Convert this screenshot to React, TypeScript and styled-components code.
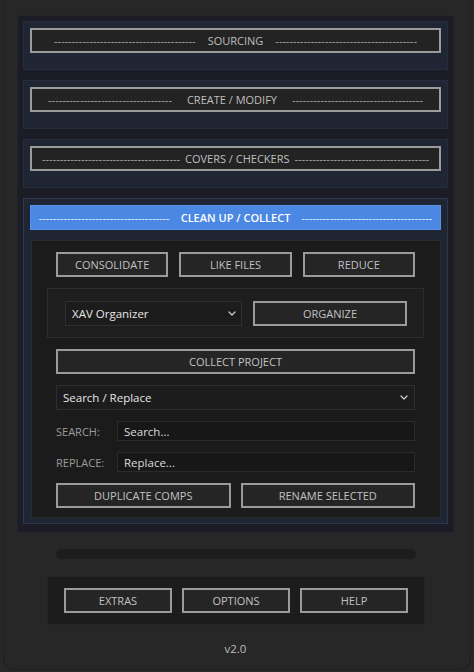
import React from "react";
import styled, { createGlobalStyle } from "styled-components";

const GlobalStyle = createGlobalStyle`
  html, body { margin: 0; padding: 0; background: #272727; }
  body { font-family: "Open Sans", "Noto Sans", sans-serif; }
  * { box-sizing: border-box; }
`;

const Page = styled.div`
  width: 474px;
  height: 672px;
  padding: 0 3px 2px;
  background: #282828;
`;

const Window = styled.div`
  height: 100%;
  display: flex;
  flex-direction: column;
  padding: 15px 16px 0 13px;
  border: 1px solid #1f1f1f;
  border-top: none;
  border-radius: 0 0 10px 10px;
  background: #272727;
`;

const OuterPanel = styled.div`
  display: flex;
  flex-direction: column;
  gap: 10px;
  padding: 5px 5px 8px;
  background: #1b1c26;
  border: 1px solid #22232d;
`;

const Section = styled.div<{ $active?: boolean }>`
  display: flex;
  flex-direction: column;
  padding: ${(p) => (p.$active ? "6px 6px 5px" : "6px 6px 16px")};
  background: #1f2533;
  border: 1px solid ${(p) => (p.$active ? "#2d3850" : "#252c3b")};
`;

const Header = styled.div<{ $active?: boolean; $gap: number }>`
  height: 25px;
  display: flex;
  align-items: center;
  justify-content: center;
  gap: ${(p) => p.$gap}px;
  white-space: nowrap;
  overflow: hidden;
  font-size: 11px;
  background: ${(p) => (p.$active ? "#4a88e3" : "#232323")};
  border: ${(p) => (p.$active ? "1px solid #5a93e6" : "2px solid #9b9b9b")};
  color: ${(p) => (p.$active ? "#ffffff" : "#bfbfbf")};
  font-weight: ${(p) => (p.$active ? 600 : 400)};
`;

const Dashes = styled.span<{ $active?: boolean }>`
  color: ${(p) => (p.$active ? "#e8f0ff" : "#a9a9a9")};
  font-weight: 400;
`;

const Inner = styled.div`
  margin-top: 10px;
  margin-left: 1px;
  display: flex;
  flex-direction: column;
  gap: 11px;
  padding: 11px 25px 9px 24px;
  background: #1b1b1b;
  border: 1px solid #2b2b2b;
`;

const ButtonRow = styled.div<{ $cols: number; $gap: number }>`
  display: grid;
  grid-template-columns: repeat(${(p) => p.$cols}, 1fr);
  gap: ${(p) => p.$gap}px;
`;

const Button = styled.button`
  height: 25px;
  padding: 0;
  background: #252525;
  border: 2px solid #9b9b9b;
  border-radius: 0;
  color: #c2c2c2;
  font-family: "Open Sans", "Noto Sans", sans-serif;
  font-size: 11px;
  cursor: pointer;
`;

const OrganizerBox = styled.div`
  margin: 0 -9px;
  display: grid;
  grid-template-columns: 177px 1fr;
  gap: 11px;
  padding: 12px 16px 11px 17px;
  background: #1e1e1e;
  border: 1px solid #2c2c2c;
`;

const SelectBox = styled.div<{ $padRight: number }>`
  height: 25px;
  display: flex;
  align-items: center;
  justify-content: space-between;
  padding: 0 ${(p) => p.$padRight}px 0 6px;
  background: #1c1c1c;
  border: 1px solid #2f2f2f;
  color: #e6e6e6;
  font-size: 11.5px;
  font-weight: 500;
`;

const Chevron = () => (
  <svg width="8" height="5" viewBox="0 0 8 5" fill="none">
    <path d="M1 1 L4 4 L7 1" stroke="#cfcfcf" strokeWidth="1.2" strokeLinecap="round" strokeLinejoin="round" />
  </svg>
);

const FieldRow = styled.div`
  display: grid;
  grid-template-columns: 61px 1fr;
  align-items: center;
`;

const FieldLabel = styled.label`
  color: #9c9c9c;
  font-size: 11px;
`;

const TextInput = styled.input`
  height: 20px;
  padding: 0 6px;
  background: #171717;
  border: 1px solid #2b2b2b;
  border-radius: 0;
  outline: none;
  color: #e0e0e0;
  font-family: "Open Sans", "Noto Sans", sans-serif;
  font-size: 11.5px;
  &::placeholder { color: #dcdcdc; opacity: 1; }
`;

const Progress = styled.div`
  margin: 16px 38px 0 39px;
  height: 10px;
  border-radius: 5px;
  background: #1d1d1d;
`;

const BottomBox = styled.div`
  margin: 17px 29px 0 30px;
  padding: 11px 16px;
  background: #1c1c1c;
  border: 1px solid #242424;
`;

const Version = styled.div`
  margin-top: 16px;
  text-align: center;
  color: #bdbdbd;
  font-size: 11.5px;
  line-height: 16px;
`;

const d = (n: number) => "-".repeat(n);

type SectionDef = { label: string; left: number; right: number; gap: number; active?: boolean };

const sections: SectionDef[] = [
  { label: "SOURCING", left: 40, right: 40, gap: 12 },
  { label: "CREATE / MODIFY", left: 35, right: 37, gap: 15 },
  { label: "COVERS / CHECKERS", left: 39, right: 38, gap: 5 },
];

const SectionHeader: React.FC<SectionDef> = ({ label, left, right, gap, active }) => (
  <Header $active={active} $gap={gap}>
    <Dashes $active={active}>{d(left)}</Dashes>
    <span>{label}</span>
    <Dashes $active={active}>{d(right)}</Dashes>
  </Header>
);

export default function App() {
  return (
    <>
      <GlobalStyle />
      <Page>
        <Window>
          <OuterPanel>
            {sections.map((s) => (
              <Section key={s.label}>
                <SectionHeader {...s} />
              </Section>
            ))}
            <Section $active>
              <SectionHeader label="CLEAN UP / COLLECT" left={37} right={37} gap={11} active />
              <Inner>
                <ButtonRow $cols={3} $gap={11}>
                  <Button>CONSOLIDATE</Button>
                  <Button>LIKE FILES</Button>
                  <Button>REDUCE</Button>
                </ButtonRow>
                <OrganizerBox>
                  <SelectBox $padRight={5}>
                    <span>XAV Organizer</span>
                    <Chevron />
                  </SelectBox>
                  <Button>ORGANIZE</Button>
                </OrganizerBox>
                <Button>COLLECT PROJECT</Button>
                <SelectBox $padRight={6}>
                  <span>Search / Replace</span>
                  <Chevron />
                </SelectBox>
                <FieldRow>
                  <FieldLabel>SEARCH:</FieldLabel>
                  <TextInput placeholder="Search..." />
                </FieldRow>
                <FieldRow>
                  <FieldLabel>REPLACE:</FieldLabel>
                  <TextInput placeholder="Replace..." />
                </FieldRow>
                <ButtonRow $cols={2} $gap={10}>
                  <Button>DUPLICATE COMPS</Button>
                  <Button>RENAME SELECTED</Button>
                </ButtonRow>
              </Inner>
            </Section>
          </OuterPanel>
          <Progress />
          <BottomBox>
            <ButtonRow $cols={3} $gap={10}>
              <Button>EXTRAS</Button>
              <Button>OPTIONS</Button>
              <Button>HELP</Button>
            </ButtonRow>
          </BottomBox>
          <Version>v2.0</Version>
        </Window>
      </Page>
    </>
  );
}
